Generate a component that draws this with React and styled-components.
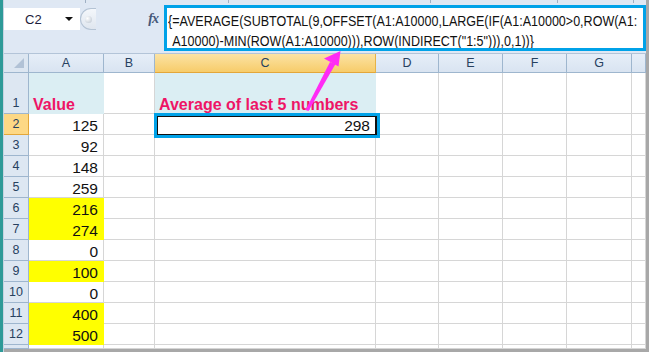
import styled, { createGlobalStyle } from "styled-components";

const GlobalStyle = createGlobalStyle`
  html, body { margin: 0; padding: 0; background: #a8a8a8; overflow: hidden; }
  body { font-family: "Liberation Sans", Arial, sans-serif; }
`;

const Screen = styled.div`
  position: relative;
  width: 649px;
  height: 352px;
  display: flex;
  align-items: flex-start;
  background: #a8a8a8;
`;

const Desktop = styled.div`
  width: 3px;
  height: 352px;
  background: #2e9a98;
  border-right: 1px solid #c7d3e0;
`;

const Window = styled.div`
  width: 642px;
  height: 349px;
  display: flex;
  flex-direction: column;
  background: #fff;
  overflow: hidden;
`;

const Ribbon = styled.div`
  height: 3px;
  display: flex;
  background: #dfe8f3;
`;

const RibbonGroup = styled.div`
  width: ${(p) => p.$w}px;
  border-right: 1px solid #9fb0c4;
`;

const FormulaBar = styled.div`
  height: 50px;
  display: flex;
  align-items: flex-start;
  background: #dfe8f4;
  border-bottom: 1px solid #b3c4d8;
`;

const NameBox = styled.div`
  margin-top: 5px;
  width: 76px;
  height: 22px;
  box-sizing: border-box;
  background: #fff;
  display: flex;
  align-items: center;
  padding: 0 7px 0 21px;
  font-size: 13px;
  color: #1c1c3c;
`;

const NameText = styled.span`
  flex: 1;
`;

const DropArrow = styled.span`
  width: 0;
  height: 0;
  border-left: 4px solid transparent;
  border-right: 4px solid transparent;
  border-top: 4px solid #111;
`;

const Splitter = styled.div`
  margin-top: 5px;
  width: 16px;
  height: 22px;
  box-sizing: border-box;
  border: 1px solid #b4c3d4;
  border-right: none;
  border-radius: 11px 0 0 11px;
  background: linear-gradient(#f4f7fb, #dfe6ef);
  display: flex;
  align-items: center;
  justify-content: center;
`;

const SplitDot = styled.div`
  width: 7px;
  height: 7px;
  border-radius: 50%;
  background: radial-gradient(circle at 35% 35%, #fff, #b9c3cf);
`;

const FxArea = styled.div`
  width: 68px;
  height: 32px;
  display: flex;
  align-items: center;
  justify-content: flex-end;
  padding-right: 6px;
  box-sizing: border-box;
`;

const Fx = styled.span`
  font-family: "Liberation Serif", "Times New Roman", serif;
  font-style: italic;
  font-weight: bold;
  font-size: 14px;
  color: #46587a;
  letter-spacing: -1px;
`;

const FormulaBox = styled.div`
  margin-top: 2px;
  width: 482px;
  height: 46px;
  box-sizing: border-box;
  border: 3px solid #00a2e8;
  background: #fff;
  padding: 3px 0 0 1px;
  overflow: hidden;
`;

const FormulaLine = styled.div`
  font-size: 15px;
  line-height: 20px;
  white-space: nowrap;
  color: #111;
  transform: scaleX(0.835);
  transform-origin: left center;
  padding-left: ${(p) => p.$indent || 0}px;
`;

const Grid = styled.div`
  display: flex;
  flex-direction: column;
`;

const Row = styled.div`
  display: flex;
  height: ${(p) => p.$h}px;
  flex: none;
`;

const Corner = styled.div`
  position: relative;
  width: 25px;
  box-sizing: border-box;
  background: #dce6f1;
  border-right: 1px solid #9eb6ce;
  border-bottom: 1px solid #9eb6ce;
  &::after {
    content: "";
    position: absolute;
    right: 4px;
    bottom: 4px;
    border-left: 10px solid transparent;
    border-bottom: 10px solid #b1c2d6;
  }
`;

const ColHead = styled.div`
  width: ${(p) => p.$w}px;
  flex: none;
  box-sizing: border-box;
  display: flex;
  align-items: center;
  justify-content: center;
  font-size: 12.5px;
  color: #27415f;
  background: ${(p) =>
    p.$active
      ? "linear-gradient(#fbe3a4, #f7cc6a)"
      : "linear-gradient(#e6eef8, #d9e4f1)"};
  border-right: 1px solid ${(p) => (p.$active ? "#e6b347" : "#9eb6ce")};
  border-bottom: 1px solid ${(p) => (p.$active ? "#e3a73a" : "#9eb6ce")};
`;

const RowHead = styled.div`
  width: 25px;
  flex: none;
  box-sizing: border-box;
  display: flex;
  align-items: flex-end;
  justify-content: center;
  font-size: 12.5px;
  line-height: 20px;
  color: #27415f;
  background: ${(p) => (p.$active ? "#fdd885" : "#dde7f2")};
  border-right: 1px solid ${(p) => (p.$active ? "#e3a73a" : "#9eb6ce")};
  border-bottom: 1px solid ${(p) => (p.$active ? "#e3a73a" : "#9eb6ce")};
`;

const Cell = styled.div`
  position: relative;
  width: ${(p) => p.$w}px;
  flex: none;
  box-sizing: border-box;
  display: flex;
  align-items: flex-end;
  justify-content: ${(p) => (p.$label ? "flex-start" : "flex-end")};
  padding: 0 ${(p) => (p.$label ? 0 : 5)}px 0 ${(p) => (p.$label ? 4 : 0)}px;
  background: ${(p) => p.$fill || "#fff"};
  border-right: 1px solid ${(p) => p.$fill || "#d6d6d6"};
  border-bottom: 1px solid ${(p) => p.$fill || "#d6d6d6"};
  font-size: ${(p) => (p.$label ? 16 : 15.5)}px;
  font-weight: ${(p) => (p.$label ? "bold" : "normal")};
  line-height: 17px;
  color: ${(p) => (p.$label ? "#ee1566" : "#111")};
  white-space: nowrap;
`;

const Selection = styled.div`
  position: absolute;
  z-index: 2;
  left: -1px;
  top: -1px;
  width: 226px;
  height: 25px;
  box-sizing: border-box;
  border: 3px solid #00a2e8;
  pointer-events: none;
  &::after {
    content: "";
    position: absolute;
    inset: 0;
    border: 1px solid #111;
    border-right: 2px solid #111;
  }
`;

const Arrow = styled.svg`
  position: absolute;
  z-index: 3;
  left: 0;
  top: 0;
  pointer-events: none;
`;

const COLS = [
  { id: "A", w: 75 },
  { id: "B", w: 51 },
  { id: "C", w: 221 },
  { id: "D", w: 63 },
  { id: "E", w: 64 },
  { id: "F", w: 64 },
  { id: "G", w: 65 },
  { id: "", w: 14 },
];

const YELLOW = "#ffff00";
const LIGHT = "#dbeef3";

const ROWS = [
  { n: 1, h: 41, a: "Value", c: "Average of last 5 numbers", label: true },
  { n: 2, h: 21, a: "125", c: "298", active: true },
  { n: 3, h: 21, a: "92" },
  { n: 4, h: 21, a: "148" },
  { n: 5, h: 21, a: "259" },
  { n: 6, h: 21, a: "216", fill: YELLOW },
  { n: 7, h: 21, a: "274", fill: YELLOW },
  { n: 8, h: 21, a: "0" },
  { n: 9, h: 21, a: "100", fill: YELLOW },
  { n: 10, h: 21, a: "0" },
  { n: 11, h: 21, a: "400", fill: YELLOW },
  { n: 12, h: 21, a: "500", fill: YELLOW },
  { n: 13, h: 4 },
];

function DataRow({ row }) {
  return (
    <Row $h={row.h}>
      <RowHead $active={row.active}>{row.h > 10 ? row.n : ""}</RowHead>
      {COLS.map((col) => {
        let text = "";
        let fill;
        if (col.id === "A") {
          text = row.a || "";
          fill = row.label ? LIGHT : row.fill;
        }
        if (col.id === "C") {
          text = row.c || "";
          if (row.label) fill = LIGHT;
        }
        return (
          <Cell key={col.id || "x"} $w={col.w} $fill={fill} $label={row.label}>
            {text}
            {row.active && col.id === "C" && <Selection />}
          </Cell>
        );
      })}
    </Row>
  );
}

export default function App() {
  return (
    <>
      <GlobalStyle />
      <Screen>
        <Desktop />
        <Window>
          <Ribbon>
            <RibbonGroup $w={81} />
            <RibbonGroup $w={142} />
            <RibbonGroup $w={201} />
            <RibbonGroup $w={126} />
            <RibbonGroup $w={75} />
          </Ribbon>
          <FormulaBar>
            <NameBox>
              <NameText>C2</NameText>
              <DropArrow />
            </NameBox>
            <Splitter>
              <SplitDot />
            </Splitter>
            <FxArea>
              <Fx>fx</Fx>
            </FxArea>
            <FormulaBox>
              <FormulaLine>
                {"{=AVERAGE(SUBTOTAL(9,OFFSET(A1:A10000,LARGE(IF(A1:A10000>0,ROW(A1:"}
              </FormulaLine>
              <FormulaLine $indent={5}>
                {'A10000)-MIN(ROW(A1:A10000))),ROW(INDIRECT("1:5"))),0,1))}'}
              </FormulaLine>
            </FormulaBox>
          </FormulaBar>
          <Grid>
            <Row $h={19}>
              <Corner />
              {COLS.map((col) => (
                <ColHead key={col.id || "x"} $w={col.w} $active={col.id === "C"}>
                  {col.id}
                </ColHead>
              ))}
            </Row>
            {ROWS.map((row) => (
              <DataRow key={row.n} row={row} />
            ))}
          </Grid>
        </Window>
        <Arrow width="649" height="352" viewBox="0 0 649 352">
          <polygon points="340.5,51 324,58.5 338.5,66.5" fill="#ff2bf5" />
          <polygon points="330,62 335.5,64 308.5,111 305.5,110" fill="#ff2bf5" />
        </Arrow>
      </Screen>
    </>
  );
}
